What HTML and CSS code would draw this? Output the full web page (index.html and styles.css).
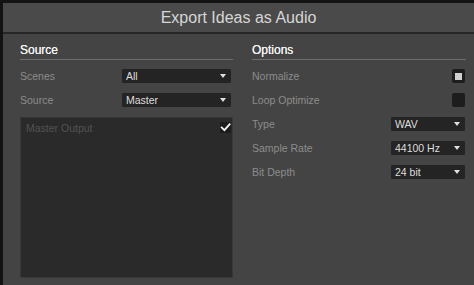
FILE: index.html
```html
<!DOCTYPE html>
<html>
<head>
<meta charset="utf-8">
<link rel="stylesheet" href="styles.css">
</head>
<body>
<div class="window">
  <div class="titlebar">Export Ideas as Audio</div>
  <div class="content">
    <section class="panel">
      <h2 class="heading">Source</h2>
      <div class="rows">
        <div class="row"><span class="label">Scenes</span><div class="select wide"><span>All</span><i class="arrow"></i></div></div>
        <div class="row"><span class="label">Source</span><div class="select wide"><span>Master</span><i class="arrow"></i></div></div>
      </div>
      <div class="outputs">
        <div class="output-item">
          <span class="output-name">Master Output</span>
          <svg class="check" width="11" height="11" viewBox="0 0 11 11"><rect width="11" height="11" rx="1" fill="#1c1c1c"/><polyline points="1.8,5.6 4.4,8.2 9.6,2.4" fill="none" stroke="#f2f2f2" stroke-width="1.9" stroke-linecap="square"/></svg>
        </div>
      </div>
    </section>
    <section class="panel">
      <h2 class="heading">Options</h2>
      <div class="rows">
        <div class="row"><span class="label">Normalize</span><div class="checkbox on"><i></i></div></div>
        <div class="row"><span class="label">Loop Optimize</span><div class="checkbox"></div></div>
        <div class="row"><span class="label">Type</span><div class="select narrow"><span>WAV</span><i class="arrow"></i></div></div>
        <div class="row"><span class="label">Sample Rate</span><div class="select narrow"><span>44100 Hz</span><i class="arrow"></i></div></div>
        <div class="row"><span class="label">Bit Depth</span><div class="select narrow"><span>24 bit</span><i class="arrow"></i></div></div>
      </div>
    </section>
  </div>
</div>
</body>
</html>
```
FILE: styles.css
```css
html, body {
  margin: 0;
  padding: 0;
  background: #131313;
  width: 474px;
  height: 285px;
  overflow: hidden;
  font-family: "Liberation Sans", Arial, sans-serif;
}
.window {
  margin: 3px 0 0 3px;
  height: 282px;
  background: #444444;
}
.titlebar {
  height: 29px;
  line-height: 29px;
  text-align: center;
  font-size: 16px;
  color: #d6d6d6;
  background: #4a4a4a;
  border-bottom: 2px solid #262626;
}
.content {
  display: grid;
  grid-template-columns: 213px 214px;
  column-gap: 19px;
  padding: 8px 0 0 17px;
}
.panel {
  display: flex;
  flex-direction: column;
}
.heading {
  margin: 0;
  height: 17px;
  line-height: 16px;
  font-size: 12px;
  font-weight: normal;
  color: #f2f2f2;
  border-bottom: 1px solid #6e6e6e;
  text-shadow: 0 0 0.4px #ffffff;
}
.rows {
  display: flex;
  flex-direction: column;
  gap: 10px;
  margin-top: 9px;
}
.row {
  display: flex;
  align-items: center;
  justify-content: space-between;
  height: 14px;
}
.label {
  font-size: 10.5px;
  color: #8c8c8c;
}
.select {
  height: 14px;
  background: #242424;
  display: flex;
  align-items: center;
  justify-content: space-between;
  box-sizing: border-box;
  padding: 0 5px 0 4px;
  font-size: 10.5px;
  color: #dedede;
  border-radius: 1px;
}
.select.wide {
  width: 109px;
  margin-right: 2px;
}
.select.narrow {
  width: 74px;
  margin-right: 1px;
}
.arrow {
  width: 0;
  height: 0;
  border-left: 3px solid transparent;
  border-right: 3px solid transparent;
  border-top: 4px solid #e0e0e0;
}
.checkbox {
  width: 13px;
  height: 14px;
  margin-right: 1px;
  background: #1d1d1d;
  border-radius: 2px;
  display: flex;
  align-items: center;
  justify-content: center;
}
.checkbox.on i {
  width: 7px;
  height: 7px;
  background: #d0d0d0;
}
.outputs {
  margin-top: 10px;
  height: 161px;
  box-sizing: border-box;
  background: #2a2a2a;
  border: 1px solid #383838;
}
.output-item {
  display: flex;
  align-items: center;
  justify-content: space-between;
  padding: 3px 1px 0 5px;
  height: 13px;
}
.output-name {
  font-size: 10.5px;
  color: #525252;
}
.check {
  display: block;
}
```
